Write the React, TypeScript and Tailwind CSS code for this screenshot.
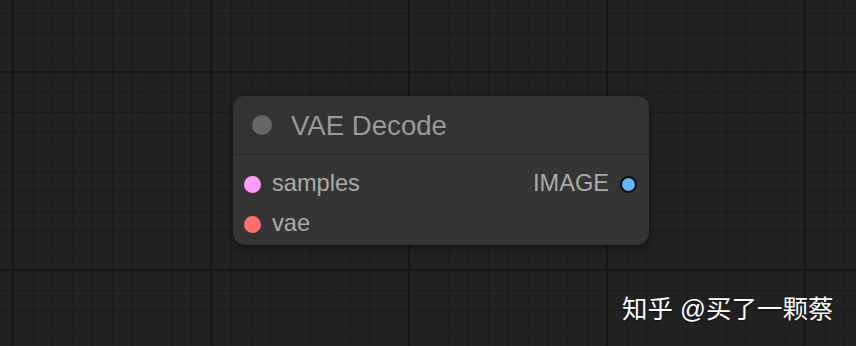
export default function App() {
  return (
    <div
      className="relative w-[856px] h-[346px] overflow-hidden bg-[#222222] font-['Liberation_Sans',Arial,sans-serif]"
      style={{
        backgroundImage:
          "linear-gradient(to right, #161616 2px, transparent 2px), linear-gradient(to bottom, #161616 2px, transparent 2px), linear-gradient(to right, #1b1b1b 1px, transparent 1px), linear-gradient(to bottom, #1b1b1b 1px, transparent 1px)",
        backgroundSize: "198px 198px, 198px 198px, 19.8px 19.8px, 19.8px 19.8px",
        backgroundPosition: "12px 71px, 12px 71px, 13px 13px, 13px 13px",
      }}
    >
      <div className="pt-[96px] pl-[233px]">
        {/* Node */}
        <div className="w-[416px] h-[149px] rounded-[12px] bg-[#353535] shadow-[0_2px_6px_rgba(0,0,0,0.55)] overflow-hidden">
          <div className="h-[59px] flex items-center border-b border-[#2a2a2a] bg-[#333333]">
            <span className="ml-[19px] w-[20px] h-[20px] rounded-full bg-[#666666]" />
            <span className="ml-[19px] mt-[2px] text-[27.6px] text-[#999999] leading-none">VAE Decode</span>
          </div>
          <div className="pt-[17px] text-[23.6px] text-[#aaaaaa] leading-none">
            <div className="h-[24px] flex items-center">
              <span className="ml-[11px] w-[17px] h-[17px] rounded-full bg-[#ff9cf9]" />
              <span className="ml-[11px]">samples</span>
              <span className="ml-auto">IMAGE</span>
              <span className="ml-[11px] mr-[12px] w-[17px] h-[17px] rounded-full bg-[#64b5f6] border-2 border-[#0b0b14]" />
            </div>
            <div className="h-[24px] mt-[16px] flex items-center">
              <span className="ml-[11px] w-[17px] h-[17px] rounded-full bg-[#ff6e6e]" />
              <span className="ml-[11px]">vae</span>
            </div>
          </div>
        </div>
      </div>

      {/* Watermark */}
      <div className="absolute left-[622px] top-[297px] text-[25.5px] leading-none text-white font-['Liberation_Sans','Noto_Sans_CJK_SC',sans-serif] [text-shadow:0_1px_2px_rgba(0,0,0,0.6)]">
        知乎 @买了一颗蔡
      </div>
    </div>
  );
}
